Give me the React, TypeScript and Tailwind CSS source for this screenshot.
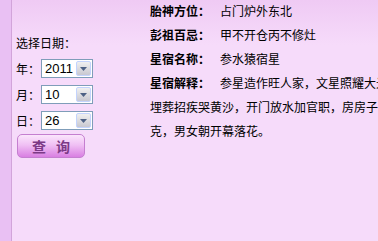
import React from "react";

const rows = [
  { label: "胎神方位：", value: "占门炉外东北" },
  { label: "彭祖百忌：", value: "甲不开仓丙不修灶" },
  { label: "星宿名称：", value: "参水猿宿星" },
  {
    label: "星宿解释：",
    value:
      "参星造作旺人家，文星照耀大光华，只因造作田财旺，埋葬招疾哭黄沙，开门放水加官职，房房子孙见田庄，婚姻许定遭刑克，男女朝开幕落花。",
  },
];

const DateSelect = ({ label, value }: { label: string; value: string }) => (
  <div className="flex items-center h-[19px]">
    <span className="w-[25px]">{label}</span>
    <div className="flex h-[19px] w-[52px] border border-[#7f9db9] bg-white">
      <span className="flex-1 pl-[3px] leading-[17px] text-[13px] font-['Liberation_Sans',sans-serif] text-black">
        {value}
      </span>
      <div className="m-[1px] flex w-[15px] items-center justify-center rounded-[2px] border border-[#c3d3fd] bg-[linear-gradient(to_bottom,#f0f0f0,#c8c8d0)]">
        <svg width="7" height="4" viewBox="0 0 7 4">
          <path d="M0 0h7L3.5 4z" fill="#4d6185" />
        </svg>
      </div>
    </div>
  </div>
);

export default function App() {
  return (
    <div className="flex h-[241px] w-[378px] overflow-hidden bg-[#f6dbfa] font-['Noto_Sans_CJK_SC',sans-serif] text-[12px] text-black">
      <div className="w-[12px] shrink-0 border-r border-[#d2a4da] bg-[#e9c0f3]" />
      <div className="flex flex-1 bg-[linear-gradient(to_bottom,#efcaf4,#f6dbfa_45px)]">
        <div className="w-[138px] shrink-0 pl-[4px] pt-[34px]">
          <div className="leading-[18px]">选择日期：</div>
          <div className="mt-[7px] flex flex-col gap-[7px]">
            <DateSelect label="年：" value="2011" />
            <DateSelect label="月：" value="10" />
            <DateSelect label="日：" value="26" />
          </div>
          <button className="mt-[4px] ml-[1px] h-[24px] w-[68px] rounded-[5px] border border-[#c57fd0] bg-[linear-gradient(to_bottom,#fbe6fc,#f0c0f4_45%,#d97fe2)] text-[14px] font-bold tracking-[10px] pl-[10px] text-[#7c3a86]">
            查询
          </button>
        </div>
        <div className="w-[360px] shrink-0 -mt-[1px] leading-[24px]">
          {rows.map((r) => (
            <div key={r.label}>
              <span className="font-bold">{r.label}</span>
              <span className="ml-[10px]">{r.value}</span>
            </div>
          ))}
        </div>
      </div>
    </div>
  );
}
